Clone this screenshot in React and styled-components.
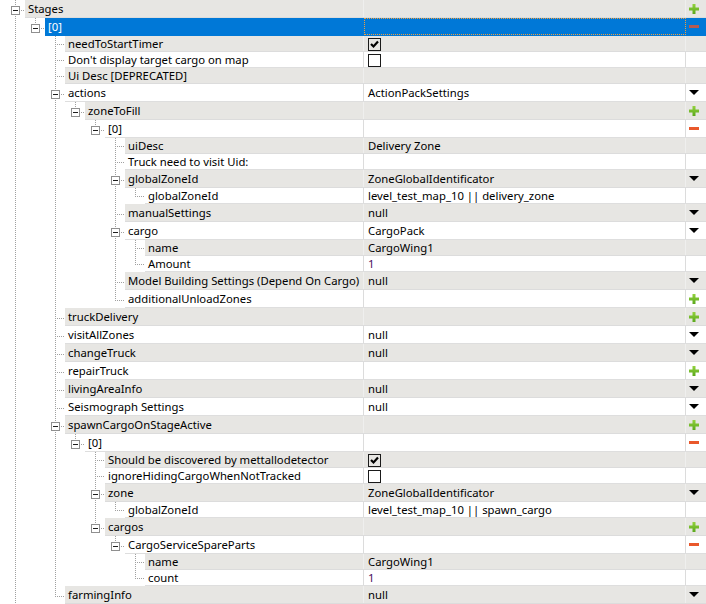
import React from "react";
import styled, { createGlobalStyle, css } from "styled-components";

const GlobalStyle = createGlobalStyle`
  html, body {
    margin: 0;
    padding: 0;
    background: #ffffff;
  }
  body {
    font-family: "Noto Sans", "Open Sans", sans-serif;
    font-size: 11.3px;
    color: #000000;
  }
`;

const DOT = "#a0a0a0";
const vDots = `repeating-linear-gradient(to bottom, ${DOT} 0 1px, transparent 1px 2px)`;
const hDots = `repeating-linear-gradient(to right, ${DOT} 0 1px, transparent 1px 2px)`;

const tree = [
  {
    label: "Stages",
    btn: "plus",
    more: true,
    children: [
      {
        label: "[0]",
        btn: "minus",
        selected: true,
        children: [
          { label: "needToStartTimer", check: true },
          { label: "Don't display target cargo on map", check: false },
          { label: "Ui Desc [DEPRECATED]" },
          {
            label: "actions",
            value: "ActionPackSettings",
            btn: "drop",
            children: [
              {
                label: "zoneToFill",
                btn: "plus",
                children: [
                  {
                    label: "[0]",
                    btn: "minus",
                    children: [
                      { label: "uiDesc", value: "Delivery Zone" },
                      { label: "Truck need to visit Uid:" },
                      {
                        label: "globalZoneId",
                        value: "ZoneGlobalIdentificator",
                        btn: "drop",
                        children: [
                          { label: "globalZoneId", value: "level_test_map_10 || delivery_zone" },
                        ],
                      },
                      { label: "manualSettings", value: "null", btn: "drop" },
                      {
                        label: "cargo",
                        value: "CargoPack",
                        btn: "drop",
                        children: [
                          { label: "name", value: "CargoWing1" },
                          { label: "Amount", value: "1", num: true },
                        ],
                      },
                      { label: "Model Building Settings (Depend On Cargo)", value: "null", btn: "drop" },
                      { label: "additionalUnloadZones", btn: "plus" },
                    ],
                  },
                ],
              },
            ],
          },
          { label: "truckDelivery", btn: "plus" },
          { label: "visitAllZones", value: "null", btn: "drop" },
          { label: "changeTruck", value: "null", btn: "drop" },
          { label: "repairTruck", btn: "plus" },
          { label: "livingAreaInfo", value: "null", btn: "drop" },
          { label: "Seismograph Settings", value: "null", btn: "drop" },
          {
            label: "spawnCargoOnStageActive",
            btn: "plus",
            children: [
              {
                label: "[0]",
                btn: "minus",
                children: [
                  { label: "Should be discovered by mettallodetector", check: true },
                  { label: "ignoreHidingCargoWhenNotTracked", check: false },
                  {
                    label: "zone",
                    value: "ZoneGlobalIdentificator",
                    btn: "drop",
                    children: [
                      { label: "globalZoneId", value: "level_test_map_10 || spawn_cargo" },
                    ],
                  },
                  {
                    label: "cargos",
                    btn: "plus",
                    children: [
                      {
                        label: "CargoServiceSpareParts",
                        btn: "minus",
                        children: [
                          { label: "name", value: "CargoWing1" },
                          { label: "count", value: "1", num: true },
                        ],
                      },
                    ],
                  },
                ],
              },
            ],
          },
          { label: "farmingInfo", value: "null", btn: "drop" },
        ],
      },
    ],
  },
];

// walk the tree into visible rows, remembering which ancestor lines continue
function flatten(nodes, level = 0, guides = [], out = []) {
  nodes.forEach((node, i) => {
    const hasNext = i < nodes.length - 1 || !!node.more;
    out.push({ ...node, level, guides, hasNext });
    if (node.children) flatten(node.children, level + 1, [...guides, hasNext], out);
  });
  return out;
}

const rows = flatten(tree);

const Grid = styled.div`
  width: 706px;
  overflow: hidden;
`;

const Row = styled.div`
  display: flex;
  height: ${(p) => p.$h}px;
`;

const Indent = styled.div`
  display: flex;
  flex: none;
  padding-left: 5px;
  height: 100%;
`;

const Guide = styled.div`
  width: 20px;
  flex: none;
  height: 100%;
  ${(p) =>
    p.$line &&
    css`
      background: ${vDots} 10px 0 / 1px 100% no-repeat;
    `}
`;

const Connector = styled.div`
  width: 20px;
  flex: none;
  height: 100%;
  box-sizing: border-box;
  padding: ${(p) => (p.$h === 18 ? 6 : 4)}px 0 0 6px;
  background-image: ${hDots}, ${vDots};
  background-repeat: no-repeat;
  background-position: 10px ${(p) => p.$cy}px, 10px 0;
  background-size: 10px 1px, 1px ${(p) => (p.$more ? "100%" : `${p.$cy}px`)};
`;

const Expander = styled.span`
  display: flex;
  align-items: center;
  justify-content: center;
  width: 9px;
  height: 9px;
  box-sizing: border-box;
  border: 1px solid #8f8f8f;
  background: #ffffff;

  &::after {
    content: "";
    width: 5px;
    height: 1px;
    background: #1e1e1e;
  }
`;

const tones = {
  gray: { bg: "#e7e6e3", line: "#dcdcdc", col: "#efefee", text: "#000000" },
  white: { bg: "#ffffff", line: "#dedede", col: "#dcdcdc", text: "#000000" },
  selected: { bg: "#0078d7", line: "#0078d7", col: "#0078d7", text: "#ffffff" },
};

const Cells = styled.div`
  display: flex;
  flex: 1;
  min-width: 0;
  box-sizing: border-box;
  background: ${(p) => tones[p.$tone].bg};
  border-bottom: 1px solid ${(p) => tones[p.$tone].line};
  line-height: ${(p) => p.$h - 1}px;
  white-space: nowrap;
`;

const Label = styled.div`
  flex: 1;
  min-width: 0;
  overflow: hidden;
  padding-left: 3px;
  color: ${(p) => tones[p.$tone].text};
  border-right: 1px solid ${(p) => tones[p.$tone].col};
`;

const Value = styled.div`
  flex: none;
  display: flex;
  align-items: center;
  width: 322px;
  box-sizing: border-box;
  padding-left: 4px;
  overflow: hidden;
  color: ${(p) => (p.$num ? "#4a1060" : "#000000")};
  border-right: 1px solid ${(p) => tones[p.$tone].col};
  ${(p) =>
    p.$focus &&
    css`
      outline: 1px dotted #f0a040;
      outline-offset: -1px;
    `}
`;

const Btn = styled.div`
  flex: none;
  display: flex;
  align-items: center;
  width: 20px;
  box-sizing: border-box;
  padding-left: 3px;
`;

const Box = styled.span`
  display: inline-flex;
  width: 13px;
  height: 13px;
  box-sizing: border-box;
  border: 1px solid #1a1a1a;
  margin-top: 1px;
`;

const CheckBox = ({ checked }) => (
  <Box>
    {checked && (
      <svg width="11" height="11" viewBox="0 0 11 11">
        <polyline points="2,5 4.5,7.5 9,2.5" fill="none" stroke="#000" strokeWidth="2.2" />
      </svg>
    )}
  </Box>
);

const PlusIcon = () => (
  <svg width="10" height="10" viewBox="0 0 10 10">
    <defs>
      <linearGradient id="plusFill" x1="0" y1="0" x2="0" y2="1">
        <stop offset="0" stopColor="#93d23d" />
        <stop offset="1" stopColor="#5aa81c" />
      </linearGradient>
    </defs>
    <path d="M3.5 0h3v3.5H10v3H6.5V10h-3V6.5H0v-3h3.5z" fill="url(#plusFill)" />
  </svg>
);

const MinusIcon = ({ muted }) => (
  <svg width="10" height="3" viewBox="0 0 10 3">
    <rect width="10" height="3" fill={muted ? "#b55b52" : "#e9582b"} />
  </svg>
);

const DropIcon = () => (
  <svg width="10" height="5" viewBox="0 0 10 5">
    <path d="M0 0h10L5 5z" fill="#000" />
  </svg>
);

const icons = {
  plus: () => <PlusIcon />,
  minus: (muted) => <MinusIcon muted={muted} />,
  drop: () => <DropIcon />,
};

const TreeRow = ({ row, index }) => {
  const h = row.btn ? 18 : 16;
  const cy = h === 18 ? 10 : 8;
  const tone = row.selected ? "selected" : index % 2 === 0 ? "gray" : "white";

  return (
    <Row $h={h}>
      <Indent>
        {row.guides.map((line, k) => (
          <Guide key={k} $line={line} />
        ))}
        <Connector $h={h} $cy={cy} $more={row.hasNext}>
          {row.children && <Expander />}
        </Connector>
      </Indent>
      <Cells $tone={tone} $h={h}>
        <Label $tone={tone}>{row.label}</Label>
        <Value $tone={tone} $num={row.num} $focus={row.selected}>
          {row.check !== undefined ? <CheckBox checked={row.check} /> : row.value}
        </Value>
        <Btn>{row.btn && icons[row.btn](row.selected)}</Btn>
      </Cells>
    </Row>
  );
};

export default function App() {
  return (
    <>
      <GlobalStyle />
      <Grid>
        {rows.map((row, i) => (
          <TreeRow key={i} row={row} index={i} />
        ))}
      </Grid>
    </>
  );
}
